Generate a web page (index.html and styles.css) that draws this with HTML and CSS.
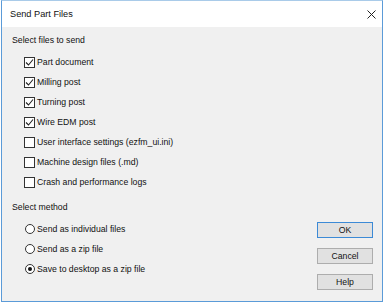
FILE: index.html
```html
<!DOCTYPE html>
<html lang="en">
<head>
    <meta charset="UTF-8">
    <title>Send Part Files</title>
    <link rel="stylesheet" href="styles.css">
</head>
<body>
    <div class="dialog">
        <!-- 标题栏 -->
        <div class="titlebar">
            <span class="title">Send Part Files</span>
            <svg class="close" width="9" height="9" viewBox="0 0 9 9">
                <path d="M0.5 0.5 L8.5 8.5 M8.5 0.5 L0.5 8.5" stroke="#222" stroke-width="1" fill="none"/>
            </svg>
        </div>

        <div class="content">
            <div class="main">
                <div class="group-label">Select files to send</div>
                <div class="options">
                    <label class="option"><span class="checkbox"><svg class="tick" viewBox="0 0 9 9"><path d="M1 4.5 L3.5 7 L8 1.5"/></svg></span>Part document</label>
                    <label class="option"><span class="checkbox"><svg class="tick" viewBox="0 0 9 9"><path d="M1 4.5 L3.5 7 L8 1.5"/></svg></span>Milling post</label>
                    <label class="option"><span class="checkbox"><svg class="tick" viewBox="0 0 9 9"><path d="M1 4.5 L3.5 7 L8 1.5"/></svg></span>Turning post</label>
                    <label class="option"><span class="checkbox"><svg class="tick" viewBox="0 0 9 9"><path d="M1 4.5 L3.5 7 L8 1.5"/></svg></span>Wire EDM post</label>
                    <label class="option"><span class="checkbox"></span>User interface settings (ezfm_ui.ini)</label>
                    <label class="option"><span class="checkbox"></span>Machine design files (.md)</label>
                    <label class="option"><span class="checkbox"></span>Crash and performance logs</label>
                </div>

                <div class="group-label method">Select method</div>
                <div class="options">
                    <label class="option"><span class="radio"></span>Send as individual files</label>
                    <label class="option"><span class="radio"></span>Send as a zip file</label>
                    <label class="option"><span class="radio selected"></span>Save to desktop as a zip file</label>
                </div>
            </div>

            <!-- 按钮组 -->
            <div class="button-group">
                <button class="default-btn">OK</button>
                <button>Cancel</button>
                <button>Help</button>
            </div>
        </div>
    </div>
</body>
</html>
```

FILE: styles.css
```css
/* 基础重置 */
* {
    margin: 0;
    padding: 0;
    box-sizing: border-box;
}

body {
    font-family: "Liberation Sans", Arial, sans-serif;
    background-color: #ffffff;
    padding-left: 1px;
}

/* 对话框外框 */
.dialog {
    width: 382px;
    height: 302px;
    border: 1px solid #5b9bd8;
    border-top-color: #a9cbe9;
    display: flex;
    flex-direction: column;
}

/* 标题栏 */
.titlebar {
    height: 26px;
    background-color: #ffffff;
    display: flex;
    align-items: center;
    justify-content: space-between;
    padding: 0 6px 0 8px;
}

.title {
    font-size: 9.2px;
    color: #111;
}

/* 内容区 */
.content {
    flex: 1;
    background-color: #f0f0f0;
    display: flex;
    justify-content: space-between;
    padding: 7px 9px 11px 10px;
}

.group-label {
    font-size: 8.7px;
    line-height: 12px;
    color: #111;
}

.group-label.method {
    margin-top: 9px;
}

.options {
    margin-top: 6px;
    padding-left: 12px;
}

.option {
    display: flex;
    align-items: center;
    height: 20px;
    font-size: 8.7px;
    color: #111;
}

/* 复选框 */
.checkbox {
    width: 11px;
    height: 11px;
    border: 1px solid #333;
    background-color: #fff;
    margin-right: 2px;
    display: flex;
}

.tick {
    width: 9px;
    height: 9px;
    fill: none;
    stroke: #222;
    stroke-width: 1.1;
}

/* 单选框 */
.radio {
    width: 10px;
    height: 10px;
    border: 1px solid #333;
    border-radius: 50%;
    background-color: #fff;
    margin: 0 2px 0 1px;
    display: flex;
    align-items: center;
    justify-content: center;
}

.radio.selected::after {
    content: "";
    width: 4px;
    height: 4px;
    border-radius: 50%;
    background-color: #111;
}

/* 右侧按钮 */
.button-group {
    display: flex;
    flex-direction: column;
    justify-content: flex-end;
    gap: 10px;
}

button {
    width: 56px;
    height: 16px;
    font-family: "Liberation Sans", Arial, sans-serif;
    font-size: 8.7px;
    color: #111;
    background-color: #e1e1e1;
    border: 1px solid #adadad;
}

.default-btn {
    border-color: #3c8ad6;
}
```
